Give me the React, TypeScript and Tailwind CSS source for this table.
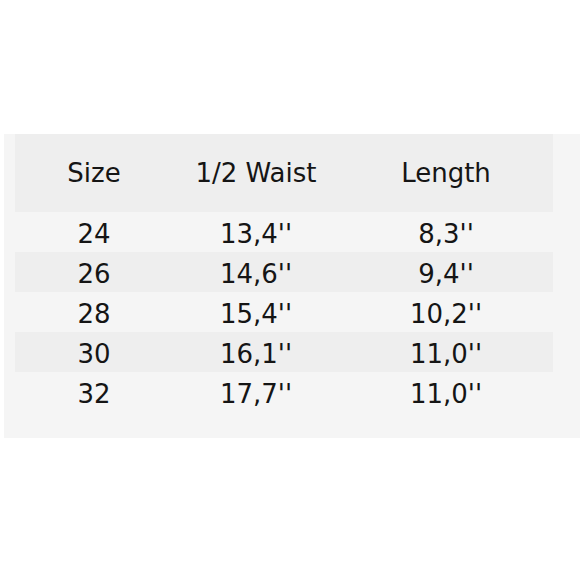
import React from "react";

const rows = [
  ["24", "13,4''", "8,3''"],
  ["26", "14,6''", "9,4''"],
  ["28", "15,4''", "10,2''"],
  ["30", "16,1''", "11,0''"],
  ["32", "17,7''", "11,0''"],
];

export default function App() {
  return (
    <div
      className="w-[580px] h-[580px] bg-white pt-[134px] pl-[4px] text-[#151515]"
      style={{ fontFamily: '"DejaVu Sans", Verdana, sans-serif' }}
    >
      <div className="h-[304px] bg-[#f5f5f5] pl-[11px]">
        <div className="w-[538px] text-[26px] leading-none">
          <div className="flex h-[78px] items-center bg-[#eeeeee]">
            <div className="w-[158px] text-center">Size</div>
            <div className="w-[166px] text-center">1/2 Waist</div>
            <div className="flex-1 text-center">Length</div>
          </div>
          {rows.map((r, i) => (
            <div
              key={r[0]}
              className={
                "flex h-[40px] items-center pt-[4px] " +
                (i % 2 === 1 ? "bg-[#eeeeee]" : "bg-[#f5f5f5]")
              }
            >
              <div className="w-[158px] text-center">{r[0]}</div>
              <div className="w-[166px] text-center">{r[1]}</div>
              <div className="flex-1 text-center">{r[2]}</div>
            </div>
          ))}
        </div>
      </div>
    </div>
  );
}
